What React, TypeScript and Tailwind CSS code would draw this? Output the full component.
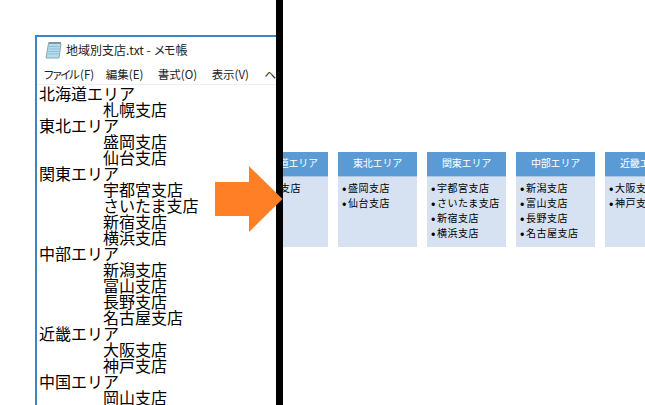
const font = { fontFamily: '"Noto Sans CJK JP", "Noto Sans", sans-serif' };

const lines: [string, boolean][] = [
  ["北海道エリア", false], ["札幌支店", true],
  ["東北エリア", false], ["盛岡支店", true], ["仙台支店", true],
  ["関東エリア", false], ["宇都宮支店", true], ["さいたま支店", true], ["新宿支店", true], ["横浜支店", true],
  ["中部エリア", false], ["新潟支店", true], ["富山支店", true], ["長野支店", true], ["名古屋支店", true],
  ["近畿エリア", false], ["大阪支店", true], ["神戸支店", true],
  ["中国エリア", false], ["岡山支店", true],
];

const cards: [string, string[]][] = [
  ["北海道エリア", ["札幌支店"]],
  ["東北エリア", ["盛岡支店", "仙台支店"]],
  ["関東エリア", ["宇都宮支店", "さいたま支店", "新宿支店", "横浜支店"]],
  ["中部エリア", ["新潟支店", "富山支店", "長野支店", "名古屋支店"]],
  ["近畿エリア", ["大阪支店", "神戸支店"]],
];

function NotepadIcon() {
  return (
    <svg width="17" height="18" viewBox="0 0 17 18" className="shrink-0">
      <path d="M3.5 2.5 H16 L14 17 H1 Z" fill="#b4dcec" stroke="#8aa6b2" strokeWidth="1" />
      <path d="M3.6 1 H16 V3 H3.3 Z" fill="#7d98a4" />
      <path d="M4 5.5 H14.5 M3.6 8 H14.2 M3.2 10.5 H13.8 M2.8 13 H13.4" stroke="#8fc0d6" strokeWidth="1" />
    </svg>
  );
}

export default function App() {
  return (
    <div className="relative flex w-[645px] h-[405px] overflow-hidden bg-white" style={font}>
      <div className="w-[276px] shrink-0 pl-[35px] pt-[35px]">
        <div className="h-[400px] border-l-2 border-t-2 border-[#3d86c6] bg-white overflow-hidden">
          <div className="flex items-center h-[26px] pl-[8px] gap-[4px] text-[12px] text-[#222222] whitespace-nowrap">
            <NotepadIcon />
            <span>
              地域別支店.txt - <span className="tracking-[-2px]">メモ</span>
              <span className="ml-[2px]">帳</span>
            </span>
          </div>
          <div className="flex items-center h-[22px] pl-[6px] pt-[2px] text-[11.5px] text-[#222222] whitespace-nowrap border-b border-[#f0f0f0]">
            <span className="w-[63px]">
              <span className="tracking-[-3px]">ファイル</span>
              <span className="ml-[3px]">(F)</span>
            </span>
            <span className="w-[52px]">編集(E)</span>
            <span className="w-[54px]">書式(O)</span>
            <span className="w-[53px]">表示(V)</span>
            <span>ヘ</span>
          </div>
          <div className="pl-[2px] text-[16px] leading-[16px] text-black whitespace-nowrap">
            {lines.map(([t, indent], i) => (
              <div key={i} className={indent ? "pl-[64px]" : ""}>{t}</div>
            ))}
          </div>
        </div>
      </div>

      <div className="w-[7px] shrink-0 bg-black" />

      <div className="flex-1 overflow-hidden pt-[152px]">
        <div className="flex gap-[10px] ml-[-34px]">
          {cards.map(([title, items]) => (
            <div key={title} className="w-[79px] h-[95px] shrink-0 bg-[#d6e1f2]">
              <div className="h-[25px] pb-[3px] bg-[#5b9bd5] border-b border-[#a9c8e8] flex items-center justify-center text-[10px] tracking-[-0.2px] text-white whitespace-nowrap">
                {title}
              </div>
              <div className="pt-[3px] pl-[4px] text-[10px] leading-[15px] tracking-[0.5px] text-black whitespace-nowrap">
                {items.map((it) => (
                  <div key={it} className="flex items-center">
                    <span className="w-[6px] text-[13px] leading-[15px]">•</span>
                    <span>{it}</span>
                  </div>
                ))}
              </div>
            </div>
          ))}
        </div>
      </div>

      <svg width="68" height="67" viewBox="0 0 68 67" className="absolute left-[215px] top-[166px]">
        <polygon points="0,16 34,16 34,0 67.5,33 34,66 34,50 0,50" fill="#ff7f27" />
      </svg>
    </div>
  );
}
